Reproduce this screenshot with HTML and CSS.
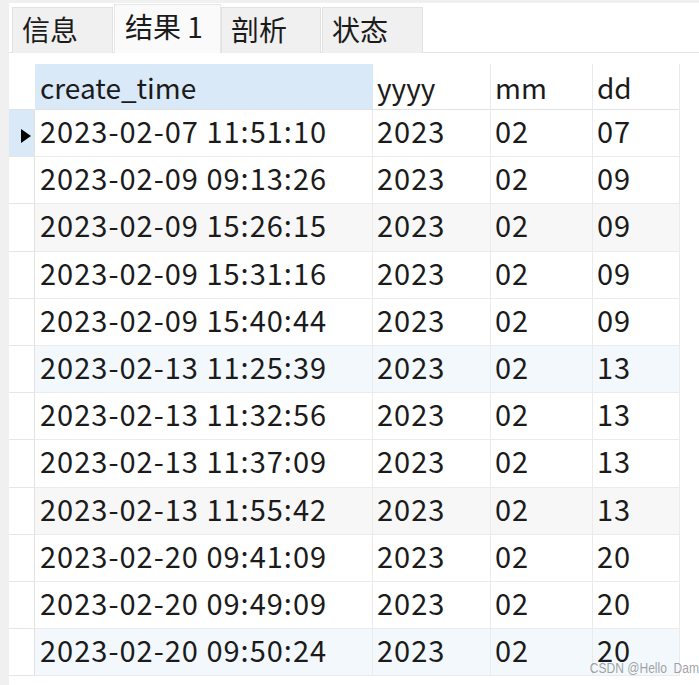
FILE: index.html
```html
<!DOCTYPE html>
<html>
<head>
<meta charset="utf-8">
<link rel="stylesheet" href="styles.css">
</head>
<body>
<div class="panel">
  <div class="tabbar">
    <div class="tab">信息</div>
    <div class="tab active">结果 1</div>
    <div class="tab">剖析</div>
    <div class="tab">状态</div>
  </div>
  <div class="grid">
    <div class="row head">
      <div class="c c0"></div>
      <div class="c c1 sel">create_time</div>
      <div class="c c2">yyyy</div>
      <div class="c c3">mm</div>
      <div class="c c4">dd</div>
    </div>
    <div class="row">
      <div class="c c0 cur"><svg class="arrow" width="10" height="14" viewBox="0 0 10 14"><polygon points="0,0 10,7 0,14" fill="#000"/></svg></div>
      <div class="c c1">2023-02-07 11:51:10</div><div class="c c2">2023</div><div class="c c3">02</div><div class="c c4">07</div>
    </div>
    <div class="row">
      <div class="c c0"></div>
      <div class="c c1">2023-02-09 09:13:26</div><div class="c c2">2023</div><div class="c c3">02</div><div class="c c4">09</div>
    </div>
    <div class="row grey">
      <div class="c c0"></div>
      <div class="c c1">2023-02-09 15:26:15</div><div class="c c2">2023</div><div class="c c3">02</div><div class="c c4">09</div>
    </div>
    <div class="row">
      <div class="c c0"></div>
      <div class="c c1">2023-02-09 15:31:16</div><div class="c c2">2023</div><div class="c c3">02</div><div class="c c4">09</div>
    </div>
    <div class="row">
      <div class="c c0"></div>
      <div class="c c1">2023-02-09 15:40:44</div><div class="c c2">2023</div><div class="c c3">02</div><div class="c c4">09</div>
    </div>
    <div class="row blue">
      <div class="c c0"></div>
      <div class="c c1">2023-02-13 11:25:39</div><div class="c c2">2023</div><div class="c c3">02</div><div class="c c4">13</div>
    </div>
    <div class="row">
      <div class="c c0"></div>
      <div class="c c1">2023-02-13 11:32:56</div><div class="c c2">2023</div><div class="c c3">02</div><div class="c c4">13</div>
    </div>
    <div class="row">
      <div class="c c0"></div>
      <div class="c c1">2023-02-13 11:37:09</div><div class="c c2">2023</div><div class="c c3">02</div><div class="c c4">13</div>
    </div>
    <div class="row grey">
      <div class="c c0"></div>
      <div class="c c1">2023-02-13 11:55:42</div><div class="c c2">2023</div><div class="c c3">02</div><div class="c c4">13</div>
    </div>
    <div class="row">
      <div class="c c0"></div>
      <div class="c c1">2023-02-20 09:41:09</div><div class="c c2">2023</div><div class="c c3">02</div><div class="c c4">20</div>
    </div>
    <div class="row">
      <div class="c c0"></div>
      <div class="c c1">2023-02-20 09:49:09</div><div class="c c2">2023</div><div class="c c3">02</div><div class="c c4">20</div>
    </div>
    <div class="row blue">
      <div class="c c0"></div>
      <div class="c c1">2023-02-20 09:50:24</div><div class="c c2">2023</div><div class="c c3">02</div><div class="c c4">20</div>
    </div>
  </div>
  <div class="watermark">CSDN @Hello&nbsp;&nbsp;Dam</div>
</div>
</body>
</html>
```
FILE: styles.css
```css
html, body {
  margin: 0;
  padding: 0;
}
body {
  background: #f0f0f0;
  width: 699px;
  height: 685px;
  overflow: hidden;
  font-family: "Noto Sans CJK SC", "Noto Sans", sans-serif;
  color: #1b1b1b;
}
.panel {
  position: relative;
  margin: 3px 0 0 9px;
  height: 682px;
  background: #ffffff;
}
.tabbar {
  display: flex;
  align-items: flex-end;
  height: 50px;
  padding-left: 3px;
  border-bottom: 1px solid #e4e4e4;
  box-sizing: border-box;
  background: #ffffff;
}
.tab {
  box-sizing: border-box;
  width: 101px;
  height: 46px;
  margin-bottom: -1px;
  background: #f0f0f0;
  border: 1px solid #e2e2e2;
  border-bottom: none;
  font-size: 28px;
  line-height: 42px;
  padding-left: 9px;
  margin-right: 1px;
}
.tab:nth-child(3) { width: 100px; }
.tab.active {
  width: 107px;
  height: 49px;
  background: #fafafa;
  padding-left: 10px;
  line-height: 42px;
  margin-right: 0;
  border-color: #e8e8e8;
}
.grid {
  margin-top: 11px;
  display: flex;
  flex-direction: column;
}
.row {
  display: flex;
  height: 47.2px;
}
.row.head {
  height: 46px;
}
.c {
  box-sizing: border-box;
  border-right: 1px solid #ebebeb;
  border-bottom: 1px solid #ebebeb;
  font-size: 29px;
  letter-spacing: 1px;
  line-height: 41px;
  padding-left: 5px;
  white-space: nowrap;
  overflow: hidden;
}
.c0 { width: 26px; padding: 0; border-right-color: #e2e2e2; border-bottom-color: #e6e6e6; position: relative; }
.c1 { width: 338px; }
.c2 { width: 118px; padding-left: 4px; }
.c3 { width: 102px; padding-left: 4px; }
.c4 { width: 87px; padding-left: 4px; }
.head .c { border-bottom-color: #e2e2e2; line-height: 46px; font-size: 28px; letter-spacing: 0; }
.head .c0 { border-right: 1px solid #ffffff; border-bottom-color: #e2e2e2; }
.head .sel { background: #d9e9f8; border-right-color: #d9e9f8; }
.cur { background: #d9e9f8; }
.grey .c1, .grey .c2, .grey .c3, .grey .c4 { background: #f7f7f7; }
.blue .c1, .blue .c2, .blue .c3, .blue .c4 { background: #f3f8fd; }
.arrow {
  position: absolute;
  left: 12px;
  top: 19px;
}
.watermark {
  position: absolute;
  right: 0;
  top: 657px;
  font-family: "Liberation Sans", sans-serif;
  font-size: 14px;
  transform: scaleX(0.86);
  transform-origin: right top;
  color: rgba(120, 120, 120, 0.7);
}
```
